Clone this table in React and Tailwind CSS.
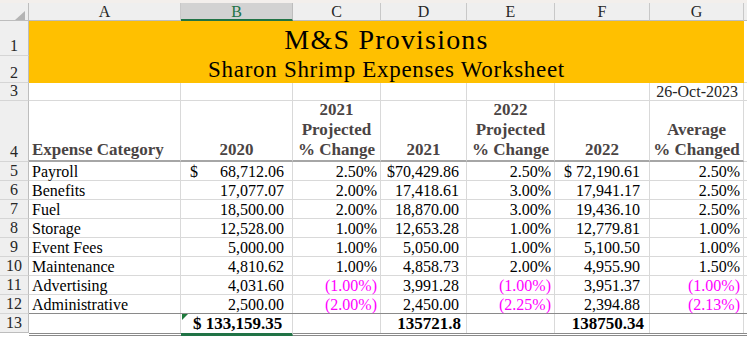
import React from "react";

const colW = ["w-[152px]", "w-[112px]", "w-[88px]", "w-[86px]", "w-[88px]", "w-[95px]", "w-[94px]"];
const letters = ["A", "B", "C", "D", "E", "F", "G"];

const rows = [
  ["Payroll", "68,712.06", "2.50%", "$70,429.86", "2.50%", "72,190.61", "2.50%"],
  ["Benefits", "17,077.07", "2.00%", "17,418.61", "3.00%", "17,941.17", "2.50%"],
  ["Fuel", "18,500.00", "2.00%", "18,870.00", "3.00%", "19,436.10", "2.50%"],
  ["Storage", "12,528.00", "1.00%", "12,653.28", "1.00%", "12,779.81", "1.00%"],
  ["Event Fees", "5,000.00", "1.00%", "5,050.00", "1.00%", "5,100.50", "1.00%"],
  ["Maintenance", "4,810.62", "1.00%", "4,858.73", "2.00%", "4,955.90", "1.50%"],
  ["Advertising", "4,031.60", "(1.00%)", "3,991.28", "(1.00%)", "3,951.37", "(1.00%)"],
  ["Administrative", "2,500.00", "(2.00%)", "2,450.00", "(2.25%)", "2,394.88", "(2.13%)"],
];

function RowHead({ n, h, last }) {
  return (
    <div
      className={`w-[29px] shrink-0 ${h} bg-[#efefef] border-r border-[#bdbdbd] border-b ${last ? "border-b-[#bdbdbd]" : "border-b-[#d5d5d5]"} flex items-end justify-center font-normal text-[16px] leading-[18px] text-[#262626]`}
    >
      {n}
    </div>
  );
}

function Pct({ v, w }) {
  const neg = v.startsWith("(");
  return (
    <div className={`${w} shrink-0 h-full border-r border-[#d9d9d9] text-right pr-[3px] ${neg ? "text-[#ff00ff]" : ""}`}>
      {v}
    </div>
  );
}

function Money({ v, w, dollar, pr }) {
  return (
    <div className={`${w} shrink-0 h-full border-r border-[#d9d9d9] flex justify-between pl-[9px] ${pr}`}>
      <span>{dollar ? "$" : ""}</span>
      <span>{v}</span>
    </div>
  );
}

export default function App() {
  return (
    <div
      className="w-[747px] h-[337px] overflow-hidden bg-white text-black"
      style={{ fontFamily: '"Liberation Serif", serif' }}
    >
      <div className="h-[3px] bg-[#f3efec]" />

      {/* column headers */}
      <div className="flex h-[18px] text-[16px] leading-[17px] text-[#262626]">
        <div className="relative w-[29px] shrink-0 bg-[#efefef] border-r border-b border-[#bdbdbd]">
          <svg className="absolute left-[15px] top-[8px]" width="10" height="9" viewBox="0 0 10 9">
            <polygon points="10,0 10,9 0,9" fill="#b4b4b4" />
          </svg>
        </div>
        {letters.map((l, i) =>
          l === "B" ? (
            <div key={l} className={`${colW[i]} shrink-0 bg-[#d2d2d2] border-r border-[#bdbdbd] border-b-2 border-b-[#217346] text-center text-[#217346]`}>
              {l}
            </div>
          ) : (
            <div key={l} className={`${colW[i]} shrink-0 bg-[#efefef] border-r border-[#c8c8c8] border-b border-b-[#bdbdbd] text-center`}>
              {l}
            </div>
          )
        )}
        <div className="flex-1 bg-[#efefef] border-b border-[#bdbdbd]" />
      </div>

      {/* rows 1-2: merged title band */}
      <div className="flex h-[62px]">
        <div className="flex flex-col">
          <RowHead n="1" h="h-[35px]" />
          <RowHead n="2" h="h-[27px]" />
        </div>
        <div className="w-[715px] shrink-0 bg-[#ffc000] flex flex-col items-center whitespace-nowrap">
          <div className="h-[35px] flex items-end pb-[1px] text-[28px] leading-[30px] tracking-[1.2px]">M&amp;S Provisions</div>
          <div className="h-[27px] flex items-end pb-[1px] text-[23px] leading-[25px] tracking-[0.7px]">Sharon Shrimp Expenses Worksheet</div>
        </div>
        <div className="flex-1 border-b border-[#d9d9d9]" />
      </div>

      {/* row 3 */}
      <div className="flex h-[18px] text-[16px] leading-[17px]">
        <RowHead n="3" h="h-[18px]" />
        {colW.map((w, i) => (
          <div key={i} className={`${w} shrink-0 h-full border-r border-b border-[#d9d9d9] text-right pr-[5px] text-[#262626] whitespace-nowrap`}>
            {i === 6 ? "26-Oct-2023" : ""}
          </div>
        ))}
        <div className="flex-1 border-b border-[#d9d9d9]" />
      </div>

      {/* row 4: column titles */}
      <div className="flex h-[61px] text-[17px] leading-[20px] font-bold text-[#4a4444]">
        <RowHead n="4" h="h-[61px]" />
        {[
          ["Expense Category"],
          ["2020"],
          ["2021", "Projected", "% Change"],
          ["2021"],
          ["2022", "Projected", "% Change"],
          ["2022"],
          ["Average", "% Changed"],
        ].map((lines, i) => (
          <div
            key={i}
            className={`${colW[i]} shrink-0 h-full border-r border-r-[#d9d9d9] border-b-2 border-b-[#a6a6a6] flex flex-col justify-end ${i === 0 ? "items-start pl-[3px]" : "items-center"}`}
          >
            {lines.map((t) => (
              <div key={t} className="whitespace-nowrap">{t}</div>
            ))}
          </div>
        ))}
        <div className="flex-1 border-b border-[#d9d9d9]" />
      </div>

      {/* rows 5-12 */}
      {rows.map((r, idx) => (
        <div key={r[0]} className="flex h-[19px] text-[16px] leading-[19px] whitespace-nowrap">
          <RowHead n={idx + 5} h="h-[19px]" />
          <div className={`flex flex-1 border-b ${idx === rows.length - 1 ? "border-[#8a8a8a]" : "border-[#d9d9d9]"}`}>
            <div className={`${colW[0]} shrink-0 h-full border-r border-[#d9d9d9] pl-[3px]`}>{r[0]}</div>
            <Money v={r[1]} w={colW[1]} dollar={idx === 0} pr="pr-[8px]" />
            <Pct v={r[2]} w={colW[2]} />
            <div className={`${colW[3]} shrink-0 h-full border-r border-[#d9d9d9] text-right pr-[7px]`}>{r[3]}</div>
            <Pct v={r[4]} w={colW[4]} />
            <Money v={r[5]} w={colW[5]} dollar={idx === 0} pr="pr-[9px]" />
            <Pct v={r[6]} w={colW[6]} />
            <div className="flex-1" />
          </div>
        </div>
      ))}

      {/* row 13: totals */}
      <div className="flex h-[22px] text-[17px] leading-[19px] font-bold whitespace-nowrap">
        <div className="flex flex-col">
          <RowHead n="13" h="h-[19px]" last />
        </div>
        <div className="flex flex-1 border-b-[3px] border-double border-[#8a8a8a]">
          <div className={`${colW[0]} shrink-0 h-full border-r border-[#d9d9d9]`} />
          <div className={`relative ${colW[1]} shrink-0 h-[22px] border-r border-[#d9d9d9] border-b-[3px] border-b-[#217346] pl-[12px]`}>
            <svg className="absolute left-[1px] top-0" width="6" height="6" viewBox="0 0 6 6">
              <polygon points="0,0 6,0 0,6" fill="#1e7a3c" />
            </svg>
            $ 133,159.35
          </div>
          <div className={`${colW[2]} shrink-0 h-full border-r border-[#d9d9d9]`} />
          <div className={`${colW[3]} shrink-0 h-full border-r border-[#d9d9d9] text-right pr-[5px]`}>135721.8</div>
          <div className={`${colW[4]} shrink-0 h-full border-r border-[#d9d9d9]`} />
          <div className={`${colW[5]} shrink-0 h-full border-r border-[#d9d9d9] text-right pr-[5px]`}>138750.34</div>
          <div className={`${colW[6]} shrink-0 h-full border-r border-[#d9d9d9]`} />
          <div className="flex-1" />
        </div>
      </div>
    </div>
  );
}
